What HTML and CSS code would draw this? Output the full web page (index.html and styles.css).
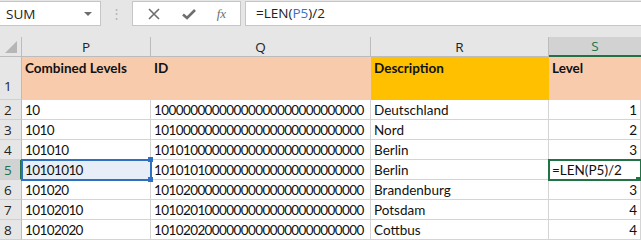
FILE: index.html
```html
<!DOCTYPE html>
<html lang="en">
<head>
  <meta charset="UTF-8" />
  <title>Sheet</title>
  <link rel="stylesheet" href="styles.css">
</head>
<body>
  <div class="formulaBar">
    <div class="nameBox">
      <span>SUM</span>
      <span class="caret"></span>
    </div>
    <div class="grip">⋮</div>
    <div class="tools">
      <svg width="14" height="14" viewBox="0 0 14 14"><path d="M2 2L12 12M12 2L2 12" stroke="#6e6e6e" stroke-width="1.6" fill="none"/></svg>
      <svg width="16" height="14" viewBox="0 0 16 14"><path d="M2 7.5L6 11L14 3" stroke="#6e6e6e" stroke-width="2.6" fill="none"/></svg>
      <span class="fx">fx</span>
    </div>
    <div class="formula">=LEN(<span class="ref">P5</span>)/2</div>
  </div>

  <div class="sheet">
    <div class="corner"><span class="tri"></span></div>
    <div class="colHead">P</div>
    <div class="colHead">Q</div>
    <div class="colHead">R</div>
    <div class="colHead active">S</div>

    <div class="rowHead tall">1</div>
    <div class="cell head peach">Combined Levels</div>
    <div class="cell head peach">ID</div>
    <div class="cell head orange">Description</div>
    <div class="cell head peach">Level</div>

    <div class="rowHead">2</div>
    <div class="cell digits">10</div>
    <div class="cell digits">10000000000000000000000000000</div>
    <div class="cell">Deutschland</div>
    <div class="cell num">1</div>

    <div class="rowHead">3</div>
    <div class="cell digits">1010</div>
    <div class="cell digits">10100000000000000000000000000</div>
    <div class="cell">Nord</div>
    <div class="cell num">2</div>

    <div class="rowHead">4</div>
    <div class="cell digits">101010</div>
    <div class="cell digits">10101000000000000000000000000</div>
    <div class="cell">Berlin</div>
    <div class="cell num">3</div>

    <div class="rowHead active">5</div>
    <div class="cell digits refCell">10101010</div>
    <div class="cell digits">10101010000000000000000000000</div>
    <div class="cell">Berlin</div>
    <div class="cell editCell">=LEN(P5)/2</div>

    <div class="rowHead">6</div>
    <div class="cell digits">101020</div>
    <div class="cell digits">10102000000000000000000000000</div>
    <div class="cell">Brandenburg</div>
    <div class="cell num">3</div>

    <div class="rowHead">7</div>
    <div class="cell digits">10102010</div>
    <div class="cell digits">10102010000000000000000000000</div>
    <div class="cell">Potsdam</div>
    <div class="cell num">4</div>

    <div class="rowHead">8</div>
    <div class="cell digits">10102020</div>
    <div class="cell digits">10102020000000000000000000000</div>
    <div class="cell">Cottbus</div>
    <div class="cell num">4</div>
  </div>
</body>
</html>
```

FILE: styles.css
```css
body {
  margin: 0;
  width: 641px;
  height: 240px;
  overflow: hidden;
  background: #e6e6e6;
  font-family: 'Open Sans', 'Noto Sans', sans-serif;
}

.formulaBar {
  height: 37px;
  display: flex;
  align-items: flex-start;
  padding-top: 1px;
  box-sizing: border-box;
}

.nameBox {
  width: 101px;
  height: 25px;
  box-sizing: border-box;
  background: #fff;
  border: 1px solid #c6c6c6;
  border-left: none;
  display: flex;
  align-items: center;
  justify-content: space-between;
  padding: 0 8px 0 6px;
  font-size: 13.5px;
  color: #222;
}

.caret {
  width: 0;
  height: 0;
  border-left: 4px solid transparent;
  border-right: 4px solid transparent;
  border-top: 4px solid #6e6e6e;
}

.grip {
  width: 31px;
  text-align: center;
  color: #b4b4b4;
  font-size: 13px;
  line-height: 25px;
}

.tools {
  width: 109px;
  height: 25px;
  box-sizing: border-box;
  background: #fff;
  border: 1px solid #c6c6c6;
  display: flex;
  align-items: center;
  justify-content: space-around;
  padding: 0 4px;
}

.fx {
  font-family: 'Liberation Serif', serif;
  font-style: italic;
  font-size: 13px;
  color: #6e6e6e;
}

.formula {
  flex: 1;
  margin-left: 4px;
  height: 25px;
  box-sizing: border-box;
  background: #fff;
  border: 1px solid #c6c6c6;
  border-right: none;
  padding-left: 10px;
  font-size: 13.5px;
  line-height: 23px;
  color: #222;
}

.ref { color: #3a72c4; }

.sheet {
  display: grid;
  grid-template-columns: 22px 129px 220px 178px 92px;
  grid-template-rows: 20px 43px repeat(7, 20px);
  font-family: 'Lato', sans-serif;
  font-size: 13.5px;
  color: #111;
}

.corner {
  position: relative;
  border-right: 1px solid #bcbcbc;
  border-bottom: 1px solid #bcbcbc;
}

.tri {
  position: absolute;
  right: 4px;
  bottom: 3px;
  width: 0;
  height: 0;
  border-left: 12px solid transparent;
  border-bottom: 12px solid #b6b6b6;
}

.colHead {
  display: flex;
  align-items: center;
  justify-content: center;
  border-right: 1px solid #bcbcbc;
  border-bottom: 1px solid #bcbcbc;
  font-family: 'Open Sans', sans-serif;
  font-size: 13.5px;
  color: #222;
}

.colHead.active {
  background: #d2d2d2;
  color: #217346;
  border-bottom: 2px solid #217346;
  border-right: none;
}

.rowHead {
  display: flex;
  align-items: center;
  padding-left: 4px;
  border-right: 1px solid #bcbcbc;
  border-bottom: 1px solid #d0d0d0;
  font-family: 'Open Sans', sans-serif;
  font-size: 13.5px;
  color: #222;
}

.rowHead.tall { align-items: flex-end; padding-bottom: 4px; }

.rowHead.active {
  background: #d2d2d2;
  color: #217346;
  border-right: 2px solid #217346;
}

.cell {
  background: #fff;
  border-right: 1px solid #d4d4d4;
  border-bottom: 1px solid #d4d4d4;
  padding: 0 3px;
  display: flex;
  align-items: center;
  white-space: nowrap;
  overflow: visible;
}

.cell.digits { letter-spacing: -0.6px; }

.cell.head {
  align-items: flex-start;
  padding-top: 3px;
  font-weight: bold;
}

.peach { background: #f8cbad; border-color: #f8cbad; }
.orange { background: #ffc000; border-color: #ffc000; }

.num { justify-content: flex-end; }

.refCell {
  position: relative;
  background: #e8eef8;
  outline: 2px solid #2e6fc2;
  outline-offset: -1px;
  z-index: 1;
}

.refCell::before,
.refCell::after {
  content: '';
  position: absolute;
  width: 5px;
  height: 5px;
  background: #2e6fc2;
  right: -3px;
}

.refCell::before { top: -3px; }
.refCell::after { bottom: -3px; }

.editCell {
  position: relative;
  outline: 2px solid #217346;
  outline-offset: -1px;
  z-index: 1;
}

.editCell::after {
  content: '';
  position: absolute;
  right: 0;
  bottom: -1px;
  width: 4px;
  height: 3px;
  background: #217346;
}
```
